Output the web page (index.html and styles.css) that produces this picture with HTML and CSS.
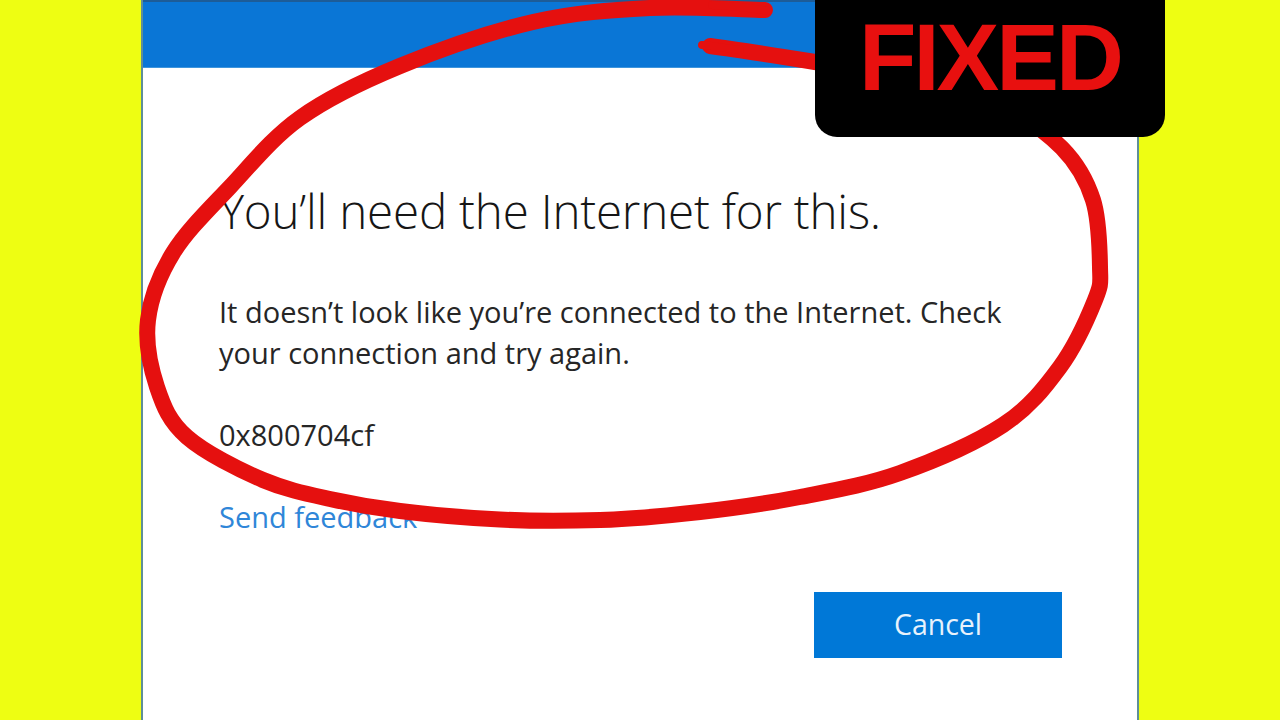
FILE: index.html
```html
<!DOCTYPE html>
<html lang="en">
<head>
<meta charset="utf-8">
<title>You'll need the Internet for this.</title>
<link rel="stylesheet" href="styles.css">
</head>
<body>
<div class="stage">
  <div class="dialog">
    <div class="titlebar"></div>
    <div class="content">
      <h1 class="heading">You’ll need the Internet for this.</h1>
      <p class="message">It doesn’t look like you’re connected to the Internet. Check your connection and try again.</p>
      <p class="code">0x800704cf</p>
      <a class="feedback" href="#">Send feedback</a>
      <div class="actions">
        <button class="cancel" type="button">Cancel</button>
      </div>
    </div>
  </div>

  <svg class="scribble" width="1280" height="720" viewBox="0 0 1280 720" aria-hidden="true">
    <path class="ring" d="M765 10 C745.8 9.7 688.7 6 650 8 C611.3 10 574.7 12.3 533 22 C491.3 31.7 438.8 50 400 66 C361.2 82 328.3 97.8 300 118 C271.7 138.2 251.2 164.5 230 187 C208.8 209.5 186.7 230.8 173 253 C159.3 275.2 150.7 297.7 148 320 C145.3 342.3 150.5 367.5 157 387 C163.5 406.5 169.3 421.5 187 437 C204.7 452.5 239.2 470 263 480 C286.8 490 307.2 494 330 499 C352.8 504 371.7 507.5 400 511 C428.3 514.5 466.7 517.8 500 519.5 C533.3 521.2 566.7 521 600 520 C633.3 519 666.7 515.8 700 512 C733.3 508.2 766.7 503.5 800 497 C833.3 490.5 866.2 485 900 473 C933.8 461 976.3 442.7 1003 425 C1029.7 407.3 1044.7 387.8 1060 367 C1075.3 346.2 1088.3 316.7 1095 300 C1101.7 283.3 1100.3 283.7 1100 267 C1099.7 250.3 1099.3 219.8 1093 200 C1086.7 180.2 1077.5 163.8 1062 148 C1046.5 132.2 1023.7 116.3 1000 105 C976.3 93.7 950.8 87.2 920 80 C889.2 72.8 851.2 67.8 815 62 C778.8 56.2 740 50 710 46"/>
    <path class="tip" d="M712 5 C735 6 752 8 768 11"/>
    <path class="tip" d="M740 50 C725 48 712 46 702 45"/>
  </svg>

  <div class="badge"><span class="badge-text">FIXED</span></div>
</div>
</body>
</html>
```

FILE: styles.css
```css
* { box-sizing: border-box; }

html, body {
  margin: 0;
  padding: 0;
  width: 1280px;
  height: 720px;
  overflow: hidden;
}

body {
  background: #eefe12;
  font-family: "Open Sans", "Noto Sans", "Liberation Sans", sans-serif;
}

.stage {
  position: relative;
  width: 1280px;
  height: 720px;
  padding-left: 141px;
  overflow: hidden;
}

.dialog {
  width: 998px;
  height: 720px;
  background: #ffffff;
  border-left: 2px solid #5f8f97;
  border-right: 2px solid #5f8f97;
  display: flex;
  flex-direction: column;
  overflow: hidden;
}

.titlebar {
  height: 68px;
  background: #0a76d6;
  border-top: 2px solid #1d5c98;
  border-bottom: 1px solid #3f95dc;
  flex: none;
}

.content {
  padding: 0 0 0 76px;
  display: flex;
  flex-direction: column;
  align-items: flex-start;
  color: #1c1c1c;
}

.heading {
  margin: 115px 0 0 0;
  font-size: 47.5px;
  font-weight: 300;
  line-height: 56px;
  letter-spacing: -0.2px;
  color: #161616;
}

.message {
  margin: 52px 0 0 0;
  width: 820px;
  font-size: 29px;
  line-height: 41px;
  font-weight: 400;
  color: #262626;
}

.code {
  margin: 41px 0 0 0;
  font-size: 29px;
  line-height: 41px;
  color: #262626;
}

.feedback {
  margin-top: 41px;
  font-size: 29px;
  line-height: 41px;
  color: #2f86d8;
  text-decoration: none;
}

.actions {
  align-self: stretch;
  display: flex;
  justify-content: flex-end;
  padding-right: 75px;
  margin-top: 55px;
}

.cancel {
  width: 248px;
  height: 66px;
  border: none;
  background: #0078d7;
  color: #e8f2fc;
  font-family: inherit;
  font-size: 28.5px;
  padding: 0 0 2px 0;
}

.scribble {
  position: absolute;
  left: 0;
  top: 0;
  pointer-events: none;
}

.ring {
  fill: none;
  stroke: #e5100f;
  stroke-width: 16;
  stroke-linecap: round;
  stroke-linejoin: round;
}

.tip {
  fill: none;
  stroke: #e5100f;
  stroke-width: 8;
  stroke-linecap: round;
}

.badge {
  position: absolute;
  left: 815px;
  top: -24px;
  width: 350px;
  height: 161px;
  background: #000000;
  border-radius: 22px;
  display: flex;
  justify-content: center;
  align-items: flex-start;
  padding-top: 30px;
}

.badge-text {
  font-family: "Liberation Sans", Arial, sans-serif;
  font-weight: 700;
  font-size: 94px;
  line-height: 104px;
  color: #e8100f;
  letter-spacing: -3px;
}
```
